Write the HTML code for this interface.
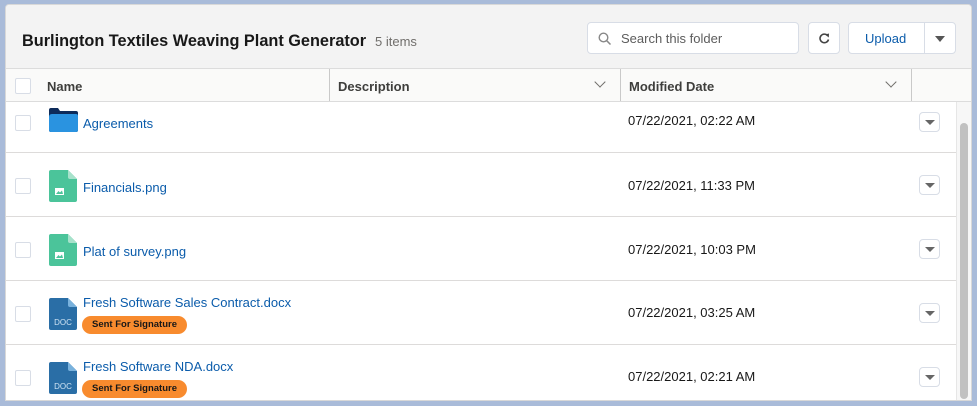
<!DOCTYPE html>
<html><head><style>
*{box-sizing:border-box;margin:0;padding:0}
body{width:977px;height:406px;background:#a9bbd9;font-family:"Liberation Sans",sans-serif;position:relative;overflow:hidden}
.card{position:absolute;left:5px;top:4px;width:967px;height:397px;background:#fff;border:1px solid #d8d8d8;border-radius:4px 4px 0 0;overflow:hidden}
.hd{position:absolute;left:0;top:0;width:100%;height:64px;background:#f3f3f3;border-bottom:1px solid #dcdcdc}
.title{position:absolute;left:16px;top:27px;font-size:16.3px;font-weight:bold;color:#181818}
.cnt{position:absolute;left:369px;top:29px;font-size:13px;color:#706e6b}
.btn{position:absolute;background:#fff;border:1px solid #d8dde6;border-radius:4px}
.th{position:absolute;top:64px;left:0;width:100%;height:33px;background:#fafaf9;border-bottom:1px solid #dcdcdc}
.th span{position:absolute;top:10px;font-size:13px;font-weight:bold;color:#3e3e3c}
.vs{position:absolute;top:0;width:1px;height:32px;background:#c9c9c9}
.cb{position:absolute;width:16px;height:16px;border:1px solid #d8dde6;border-radius:2px;background:#fff}
.row{position:absolute;left:0;width:950px;border-bottom:1px solid #dddbda}
.lnk{position:absolute;font-size:13px;color:#0b5cab}
.dt{position:absolute;left:622px;font-size:13px;color:#181818}
.ab{position:absolute;left:913px;width:21px;height:20px;border:1px solid #d8dde6;border-radius:4px;background:#fff}
.ab:after{content:"";position:absolute;left:5px;top:7px;border-left:5px solid transparent;border-right:5px solid transparent;border-top:5px solid #666}
.badge{position:absolute;left:76px;height:18px;width:105px;background:#f88b2e;border-radius:9px;font-size:9.5px;font-weight:bold;color:#181818;text-align:center;line-height:18px}
.chev{position:absolute;top:9px;width:8px;height:8px;border-right:1.5px solid #706e6b;border-bottom:1.5px solid #706e6b;transform:rotate(45deg)}
</style></head><body>
<div class="card">
<div class="hd">
<div class="title">Burlington Textiles Weaving Plant Generator</div>
<div class="cnt">5 items</div>
<div class="btn" style="left:581px;top:17px;width:212px;height:32px">
<svg style="position:absolute;left:10px;top:9px" width="14" height="14" viewBox="0 0 14 14"><circle cx="5.5" cy="5.5" r="4.3" fill="none" stroke="#888" stroke-width="1.4"/><path d="M8.7 8.7L12.5 12.5" stroke="#888" stroke-width="1.5"/></svg>
<span style="position:absolute;left:33px;top:8px;font-size:13px;color:#5c5c5c">Search this folder</span></div>
<div class="btn" style="left:802px;top:17px;width:32px;height:32px">
<svg style="position:absolute;left:9px;top:9px" width="13" height="13" viewBox="0 0 13 13"><path d="M10.5 7.5A4.3 4.3 0 1 1 9.5 3.5" fill="none" stroke="#444" stroke-width="1.6"/><path d="M7 2.5L11 1.5L10.8 5.5Z" fill="#444"/></svg></div>
<div class="btn" style="left:842px;top:17px;width:77px;height:32px;border-radius:4px 0 0 4px"><span style="position:absolute;left:16px;top:8px;font-size:13px;color:#0b5cab">Upload</span></div>
<div class="btn" style="left:918px;top:17px;width:32px;height:32px;border-radius:0 4px 4px 0"><div style="position:absolute;left:10px;top:13px;border-left:5px solid transparent;border-right:5px solid transparent;border-top:6px solid #555"></div></div>
</div>
<div class="th">
<div class="cb" style="left:9px;top:9px"></div>
<span style="left:41px">Name</span>
<div class="vs" style="left:323px"></div>
<span style="left:332px">Description</span>
<div class="chev" style="left:590px"></div>
<div class="vs" style="left:614px"></div>
<span style="left:623px">Modified Date</span>
<div class="chev" style="left:881px"></div>
<div class="vs" style="left:905px"></div>
</div>
<div style="position:absolute;left:950px;top:97px;width:16px;height:300px;background:#f7f7f7;border-left:1px solid #e6e6e6"></div>
<div style="position:absolute;left:954px;top:118px;width:8px;height:276px;background:#c1c1c1;border-radius:4px"></div>

<div class="row" style="top:97px;height:51px">
<div class="cb" style="left:9px;top:13px"></div>
<svg style="position:absolute;left:43px;top:6px" width="29" height="24" viewBox="0 0 29 24"><path d="M0 2Q0 0 2 0H9L11 3H27Q29 3 29 5V22Q29 24 27 24H2Q0 24 0 22Z" fill="#0d2b5a"/><path d="M3 6H27Q29 6 29 8V22Q29 24 27 24H2Q0 24 0 22V9Q0 6 3 6Z" fill="#2a93e0"/></svg>
<div class="lnk" style="left:77px;top:14px">Agreements</div>
<div class="dt" style="top:11px">07/22/2021, 02:22 AM</div>
<div class="ab" style="top:10px"></div>
</div>
<div class="row" style="top:148px;height:64px">
<div class="cb" style="left:9px;top:25px"></div>
<svg style="position:absolute;left:43px;top:17px" width="28" height="32" viewBox="0 0 28 32"><path d="M2 0H19L28 9V30Q28 32 26 32H2Q0 32 0 30V2Q0 0 2 0Z" fill="#4bc49a"/><path d="M19 0L28 9H21Q19 9 19 7Z" fill="#a7e2cb"/><rect x="6" y="18" width="9" height="7" fill="#fff"/><path d="M7 24L9.5 21L11 22.5L13 20.5L14 24Z" fill="#4bc49a"/></svg>
<div class="lnk" style="left:77px;top:27px">Financials.png</div>
<div class="dt" style="top:25px">07/22/2021, 11:33 PM</div>
<div class="ab" style="top:22px"></div>
</div>
<div class="row" style="top:212px;height:64px">
<div class="cb" style="left:9px;top:25px"></div>
<svg style="position:absolute;left:43px;top:17px" width="28" height="32" viewBox="0 0 28 32"><path d="M2 0H19L28 9V30Q28 32 26 32H2Q0 32 0 30V2Q0 0 2 0Z" fill="#4bc49a"/><path d="M19 0L28 9H21Q19 9 19 7Z" fill="#a7e2cb"/><rect x="6" y="18" width="9" height="7" fill="#fff"/><path d="M7 24L9.5 21L11 22.5L13 20.5L14 24Z" fill="#4bc49a"/></svg>
<div class="lnk" style="left:77px;top:27px">Plat of survey.png</div>
<div class="dt" style="top:25px">07/22/2021, 10:03 PM</div>
<div class="ab" style="top:22px"></div>
</div>
<div class="row" style="top:276px;height:64px">
<div class="cb" style="left:9px;top:25px"></div>
<svg style="position:absolute;left:43px;top:17px" width="28" height="32" viewBox="0 0 28 32"><path d="M2 0H19L28 9V30Q28 32 26 32H2Q0 32 0 30V2Q0 0 2 0Z" fill="#2a6ea6"/><path d="M19 0L28 9H21Q19 9 19 7Z" fill="#79b2dd"/><text x="14" y="27" font-size="8" fill="#cfe3f3" text-anchor="middle" font-family="Liberation Sans">DOC</text></svg>
<div class="lnk" style="left:77px;top:14px">Fresh Software Sales Contract.docx</div>
<div class="badge" style="top:35px">Sent For Signature</div>
<div class="dt" style="top:24px">07/22/2021, 03:25 AM</div>
<div class="ab" style="top:22px"></div>
</div>
<div class="row" style="top:340px;height:64px;border:0">
<div class="cb" style="left:9px;top:25px"></div>
<svg style="position:absolute;left:43px;top:17px" width="28" height="32" viewBox="0 0 28 32"><path d="M2 0H19L28 9V30Q28 32 26 32H2Q0 32 0 30V2Q0 0 2 0Z" fill="#2a6ea6"/><path d="M19 0L28 9H21Q19 9 19 7Z" fill="#79b2dd"/><text x="14" y="27" font-size="8" fill="#cfe3f3" text-anchor="middle" font-family="Liberation Sans">DOC</text></svg>
<div class="lnk" style="left:77px;top:14px">Fresh Software NDA.docx</div>
<div class="badge" style="top:35px">Sent For Signature</div>
<div class="dt" style="top:24px">07/22/2021, 02:21 AM</div>
<div class="ab" style="top:22px"></div>
</div>
</div>
</body></html>
